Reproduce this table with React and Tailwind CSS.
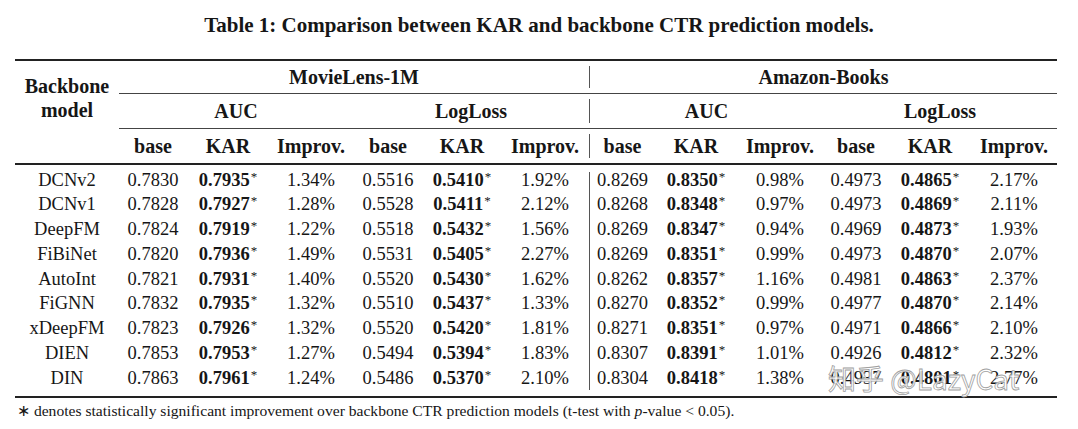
import React from "react";

const rows = [
  ["DCNv2", "0.7830", "0.7935", "1.34%", "0.5516", "0.5410", "1.92%", "0.8269", "0.8350", "0.98%", "0.4973", "0.4865", "2.17%"],
  ["DCNv1", "0.7828", "0.7927", "1.28%", "0.5528", "0.5411", "2.12%", "0.8268", "0.8348", "0.97%", "0.4973", "0.4869", "2.11%"],
  ["DeepFM", "0.7824", "0.7919", "1.22%", "0.5518", "0.5432", "1.56%", "0.8269", "0.8347", "0.94%", "0.4969", "0.4873", "1.93%"],
  ["FiBiNet", "0.7820", "0.7936", "1.49%", "0.5531", "0.5405", "2.27%", "0.8269", "0.8351", "0.99%", "0.4973", "0.4870", "2.07%"],
  ["AutoInt", "0.7821", "0.7931", "1.40%", "0.5520", "0.5430", "1.62%", "0.8262", "0.8357", "1.16%", "0.4981", "0.4863", "2.37%"],
  ["FiGNN", "0.7832", "0.7935", "1.32%", "0.5510", "0.5437", "1.33%", "0.8270", "0.8352", "0.99%", "0.4977", "0.4870", "2.14%"],
  ["xDeepFM", "0.7823", "0.7926", "1.32%", "0.5520", "0.5420", "1.81%", "0.8271", "0.8351", "0.97%", "0.4971", "0.4866", "2.10%"],
  ["DIEN", "0.7853", "0.7953", "1.27%", "0.5494", "0.5394", "1.83%", "0.8307", "0.8391", "1.01%", "0.4926", "0.4812", "2.32%"],
  ["DIN", "0.7863", "0.7961", "1.24%", "0.5486", "0.5370", "2.10%", "0.8304", "0.8418", "1.38%", "0.4937", "0.4801", "2.77%"],
];

const cols =
  "grid grid-cols-[104px_68px_82px_84px_70px_78px_88px_1px_65px_82px_86px_66px_82px_86px]";

const subHeads = ["base", "KAR", "Improv.", "base", "KAR", "Improv."];

function Star({ v }) {
  return (
    <span className="font-bold">
      {v}
      <span className="relative top-[-5px] ml-px text-[13px] font-normal">*</span>
    </span>
  );
}

function Cells({ vals }) {
  return vals.map((v, i) => (
    <div key={i} className="flex items-center justify-center">
      {i % 3 === 1 ? <Star v={v} /> : v}
    </div>
  ));
}

export default function App() {
  return (
    <div
      className="relative h-[429px] w-[1078px] bg-white text-[#161616]"
      style={{ fontFamily: '"Liberation Serif", "Times New Roman", serif' }}
    >
      <h1 className="pt-[12px] text-center text-[21px] font-bold leading-[26px]">
        Table 1: Comparison between KAR and backbone CTR prediction models.
      </h1>

      <div className="ml-[15px] mt-[21px] w-[1042px] text-[18.5px]">
        {/* header */}
        <div className={`${cols} grid-rows-[33px_35px_36px] border-t-2 border-[#222] text-[20px] font-bold`}>
          <div className="row-span-3 border-b-2 border-[#222] pt-[13px] text-center leading-[24px]">
            Backbone
            <br />
            model
          </div>
          <div className="col-span-6 flex items-center justify-center border-b border-[#444]">
            MovieLens-1M
          </div>
          <div className="flex justify-center border-b border-[#444] py-[5px]">
            <div className="w-px bg-[#555]" />
          </div>
          <div className="col-span-6 flex items-center justify-center border-b border-[#444]">
            Amazon-Books
          </div>

          <div className="col-span-3 flex items-center justify-center border-b border-[#444]">AUC</div>
          <div className="col-span-3 flex items-center justify-center border-b border-[#444]">LogLoss</div>
          <div className="flex justify-center border-b border-[#444] py-[5px]">
            <div className="w-px bg-[#555]" />
          </div>
          <div className="col-span-3 flex items-center justify-center border-b border-[#444]">AUC</div>
          <div className="col-span-3 flex items-center justify-center border-b border-[#444]">LogLoss</div>

          {subHeads.map((h, i) => (
            <div key={"a" + i} className="flex items-center justify-center border-b-2 border-[#222]">
              {h}
            </div>
          ))}
          <div className="flex justify-center border-b-2 border-[#222] py-[5px]">
            <div className="w-px bg-[#555]" />
          </div>
          {subHeads.map((h, i) => (
            <div key={"b" + i} className="flex items-center justify-center border-b-2 border-[#222]">
              {h}
            </div>
          ))}
        </div>

        {/* body */}
        <div className={`${cols} grid-rows-[repeat(9,24.75px)] border-b-2 border-[#222] pb-[5px] pt-[3px]`}>
          <div className="col-start-8 row-span-9 row-start-1 flex justify-center pb-[1px] pt-[4px]">
            <div className="w-px bg-[#555]" />
          </div>
          {rows.map((r) => (
            <React.Fragment key={r[0]}>
              <div className="flex items-center justify-center">{r[0]}</div>
              <Cells vals={r.slice(1, 7)} />
              <Cells vals={r.slice(7)} />
            </React.Fragment>
          ))}
        </div>
      </div>

      <p className="ml-[17px] mt-[3px] text-[15.6px] leading-[20px]">
        ∗ denotes statistically significant improvement over backbone CTR prediction models (t-test with{" "}
        <i>p</i>-value &lt; 0.05).
      </p>

      {/* watermark */}
      <div
        className="absolute left-[828px] top-[360px] text-[28px] leading-[36px] text-white/85 [-webkit-text-stroke:0.8px_#a0a0a0]"
        style={{ fontFamily: '"Noto Sans CJK SC", "Noto Sans", sans-serif' }}
      >
        知乎 @LazyCat
      </div>
    </div>
  );
}
